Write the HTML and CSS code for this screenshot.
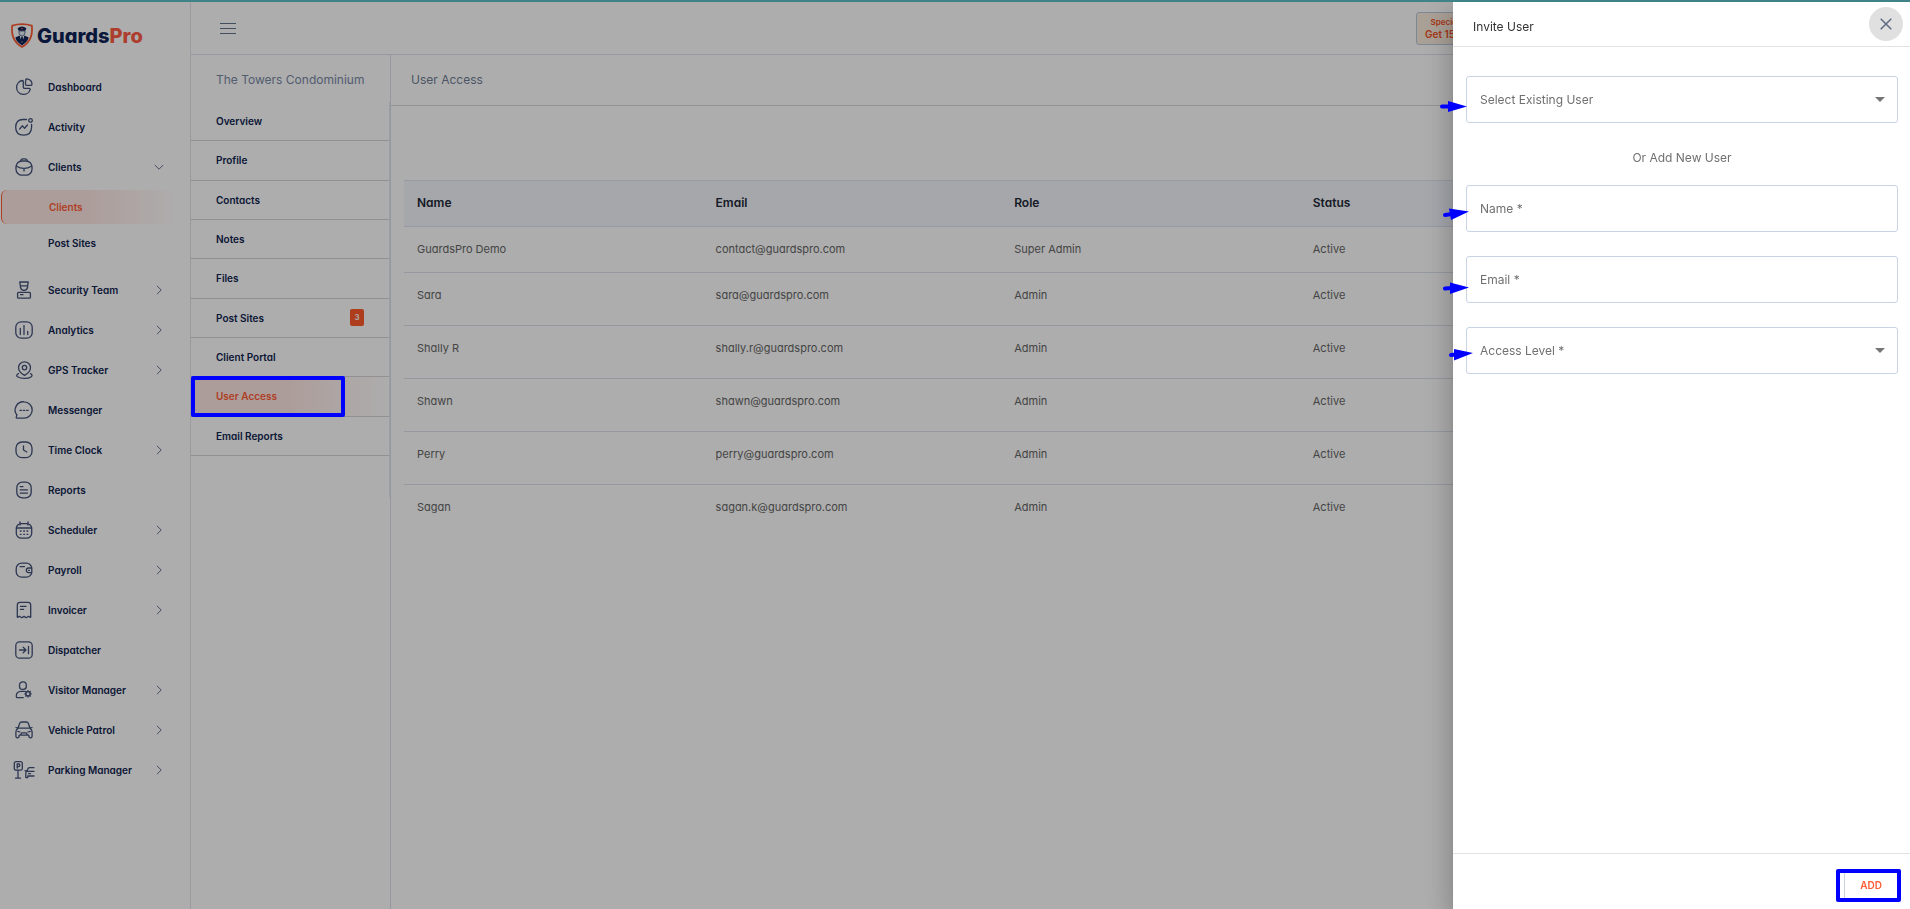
FILE: index.html
```html
<!DOCTYPE html>
<html lang="en">
<head>
<meta charset="utf-8">
<title>GuardsPro – User Access</title>
<meta name="viewport" content="width=device-width, initial-scale=1">
<link rel="stylesheet" href="styles.css">
</head>
<body>
<svg class="defs" aria-hidden="true">
  <symbol id="right" viewBox="0 0 6 10"><path d="M1 .8 5.2 5 1 9.2"/></symbol>
</svg>
<div class="app">
  <aside class="sidebar">
    <a class="brand" href="#">
      <svg class="shield" viewBox="0 0 24 26" aria-hidden="true">
        <path d="M2.2 2.6Q12-.4 21.8 2.6Q23.6 17.5 12 24Q.4 17.5 2.2 2.6Z" fill="#fff" stroke="#ff5c35" stroke-width="1.8"/>
        <path d="M5.3 14.6 9.6 12.4 12 20 14.4 12.4 18.7 14.6Q17.6 19.2 12 22.4 6.4 19.2 5.3 14.6Z" fill="#0d2256"/>
        <path d="M7.6 5.2Q12 2 16.4 5.2L15.4 7.8H8.6Z" fill="#0d2256"/>
        <path d="M9 8h6v2.2Q14.6 12.6 12 13 9.4 12.6 9 10.2Z" fill="#e9edf6" stroke="#0d2256" stroke-width=".6"/>
        <path d="M11.3 13.6h1.4l.5 3.6-1.2 2-1.2-2Z" fill="#0d2256"/>
        <circle cx="12" cy="5.6" r=".8" fill="#ff5c35"/>
      </svg>
      <span class="brand-name">Guards<span class="accent">Pro</span></span>
    </a>
    <nav class="menu">
      <a href="#"><svg class="icon" viewBox="0 0 18 18"><path d="M7.5 2.5A7 7 0 1 0 15.3 11.4Q15.2 10.4 14 10.4H9.8Q8.3 10.4 8.3 9V3.4Q8.3 2.5 7.5 2.5Z"/><path d="M10.8 1.6Q11 .8 12 .8 16.600 1.500 17 6Q17 7.200 16 7.300H11.600Q10.400 7.200 10.400 6Z"/></svg><span>Dashboard</span></a>
      <a href="#"><svg class="icon" viewBox="0 0 18 18"><path d="M11.500 1.500H8Q.7 1.500 .7 9.300T8.500 17.200 16.600 9.300V6.500"/><path d="M4.700 11 7.300 7.800 9.600 10.200 12.400 7"/><circle cx="15.500" cy="2.400" r="1.800"/></svg><span>Activity</span></a>
      <a href="#"><svg class="icon" viewBox="0 0 18 18"><rect x="1" y="3" width="16" height="14.200" rx="6"/><path d="M5.800 3Q6 .8 8 .8H10Q12 .8 12.200 3M1.200 8Q9 12.800 16.800 8M9 10.500V13"/></svg><span>Clients</span><svg class="chev chev-down" viewBox="0 0 10 6"><path d="M.8 1 5 5.200 9.200 1"/></svg></a>
      <div class="submenu">
        <a class="current" href="#">Clients</a>
        <a href="#">Post Sites</a>
      </div>
      <a href="#"><svg class="icon" viewBox="0 0 18 18"><path d="M4.800 1H13.200L12.600 4.800H5.400ZM5.400 4.800V6.200Q5.800 9.200 9 9.400 12.200 9.200 12.600 6.200V4.800"/><rect x="2.600" y="11.400" width="12.800" height="5.800" rx="1"/><path d="M5.500 13.700H8"/></svg><span>Security Team</span><svg class="chev"><use href="#right"/></svg></a>
      <a href="#"><svg class="icon" viewBox="0 0 18 18"><rect x=".8" y=".8" width="16.400" height="16.400" rx="5.500"/><path d="M5.300 7.500V13.500M9 4.500V13.500M12.700 10.500V13.500"/></svg><span>Analytics</span><svg class="chev"><use href="#right"/></svg></a>
      <a href="#"><svg class="icon" viewBox="0 0 18 18"><path d="M9.500 14.400Q3.500 11 3.500 6.500A6 5.700 0 0 1 15.500 6.500Q15.500 11 9.500 14.400Z"/><circle cx="9.500" cy="6.600" r="2.200"/><path d="M3.500 12.600Q.5 14 2.500 15.700 5 17.400 9.500 17.400T16.200 15.700Q18.200 14 15.500 12.600"/></svg><span>GPS Tracker</span><svg class="chev"><use href="#right"/></svg></a>
      <a href="#"><svg class="icon" viewBox="0 0 18 18"><path d="M9 .8A8.200 8.200 0 1 1 9 17.200H2Q.9 17 1.300 15.900L1.900 14A8.200 8.200 0 0 1 9 .8Z"/><path d="M5 9.300H6.500M8.300 9.300H9.800M11.600 9.300H13.100"/></svg><span>Messenger</span></a>
      <a href="#"><svg class="icon" viewBox="0 0 18 18"><rect x="1" y="1" width="16" height="15.600" rx="6"/><path d="M8.500 4.800V9L11.800 11"/></svg><span>Time Clock</span><svg class="chev"><use href="#right"/></svg></a>
      <a href="#"><svg class="icon" viewBox="0 0 18 18"><rect x="1.800" y="1.200" width="14.400" height="15.600" rx="5.500"/><path d="M5.200 5.600H8M5.200 8.900H12.500M5.200 12.200H12.500"/></svg><span>Reports</span></a>
      <a href="#"><svg class="icon" viewBox="0 0 18 18"><rect x="1.300" y="2.600" width="15.400" height="14.600" rx="5"/><path d="M5 .8V4M13 .8V4M1.400 7H16.600"/><path d="M5.300 10h.8M8.700 10h.8M12 10h.8M5.300 13.300h.8M8.700 13.300h.8M12 13.300h.8"/></svg><span>Scheduler</span><svg class="chev"><use href="#right"/></svg></a>
      <a href="#"><svg class="icon" viewBox="0 0 18 18"><rect x="1.200" y="2.200" width="15.600" height="14" rx="5.500"/><path d="M5 5.600H9.500M16.600 7H13.500Q11.300 7.300 11.300 9.300T13.500 11.700H16.600M13.600 9.300H14.400"/></svg><span>Payroll</span><svg class="chev"><use href="#right"/></svg></a>
      <a href="#"><svg class="icon" viewBox="0 0 18 18"><path d="M2.300 16.300V4Q2.300 1.300 5 1.300H13Q15.700 1.300 15.700 4V16.300L13.500 15.300 11.200 16.800 9 15.400 6.800 16.800 4.500 15.300Z"/><path d="M5.500 5.400H11M5.500 8.400H8.600"/></svg><span>Invoicer</span><svg class="chev"><use href="#right"/></svg></a>
      <a href="#"><svg class="icon" viewBox="0 0 18 18"><rect x=".8" y=".8" width="16.400" height="16.400" rx="3.800"/><path d="M4.500 9H10.600M8.200 6.300 11 9 8.200 11.700M13.500 5.300V12.700"/></svg><span>Dispatcher</span></a>
      <a href="#"><svg class="icon" viewBox="0 0 18 18"><rect x="4.500" y=".8" width="6.800" height="7.600" rx="3.200"/><path d="M9.500 10.300H6Q1.300 10.500 1.300 15V15.500Q1.300 16.700 2.500 16.700H8.200"/><circle cx="13" cy="12.800" r="2.200"/><path d="M13 9.600v1M13 15v1M9.800 12.800h1M15.200 12.800h1M10.700 10.500l.8.8M14.500 14.300l.8.8M10.700 15.100l.8-.8M14.500 11.300l.8-.8"/></svg><span>Visitor Manager</span><svg class="chev"><use href="#right"/></svg></a>
      <a href="#"><svg class="icon" viewBox="0 0 18 18"><path d="M3 7.200 4.500 2.700Q5 1 7 1H11Q13 1 13.500 2.700L15 7.200M1 6.500 3 7.200H15L17 6.500M3 7.200Q1 8.500 .9 11V15.200Q1 16.900 2.500 16.900T4.200 15.200V14.200H13.800V15.200Q14 16.900 15.500 16.900T17.100 15.200V11Q17 8.500 15 7.200M2.800 10.300 5 11M15.200 10.300 13 11M5.500 14 6.800 11.800H11.200L12.500 14"/></svg><span>Vehicle Patrol</span><svg class="chev"><use href="#right"/></svg></a>
      <a href="#"><svg class="icon" viewBox="0 0 18 18"><rect x="-.7" y=".7" width="8" height="8.500" rx="1.700"/><path d="M2.200 7V3H3.500Q4.900 3.100 4.900 4.300T3.500 5.600H2.200M3 9.200V17M.5 17.200H5.500M19 6.600H14.500Q13.300 6.700 12.800 8L12 10.300M19 10.400H12Q10.800 10.600 10.800 12V16.600H12.800V15H19M10 9.600 12 10.400M13.500 12.700H15.500"/></svg><span>Parking Manager</span><svg class="chev"><use href="#right"/></svg></a>
    </nav>
  </aside>

  <div class="page">
    <header class="topbar">
      <button class="burger" type="button" aria-label="Toggle menu"><span></span><span></span><span></span></button>
      <a class="promo" href="#"><span class="promo-small">Special</span><span class="promo-big">Get 15%</span></a>
    </header>
    <div class="body">
      <section class="client">
        <h2 class="client-title">The Towers Condominium</h2>
        <div class="client-panel">
          <nav class="tabs">
            <a href="#">Overview</a>
            <a href="#">Profile</a>
            <a href="#">Contacts</a>
            <a href="#">Notes</a>
            <a href="#">Files</a>
            <a href="#">Post Sites<span class="badge">3</span></a>
            <a href="#">Client Portal</a>
            <a class="current" href="#">User Access</a>
            <a href="#">Email Reports</a>
          </nav>
        </div>
      </section>
      <main class="content">
        <h1 class="content-title">User Access</h1>
        <table class="users">
          <thead><tr><th>Name</th><th>Email</th><th>Role</th><th>Status</th><th></th></tr></thead>
          <tbody>
            <tr class="owner"><td>GuardsPro Demo</td><td>contact@guardspro.com</td><td>Super Admin</td><td>Active</td><td></td></tr>
            <tr><td>Sara</td><td>sara@guardspro.com</td><td>Admin</td><td>Active</td><td></td></tr>
            <tr><td>Shally R</td><td>shally.r@guardspro.com</td><td>Admin</td><td>Active</td><td></td></tr>
            <tr><td>Shawn</td><td>shawn@guardspro.com</td><td>Admin</td><td>Active</td><td></td></tr>
            <tr><td>Perry</td><td>perry@guardspro.com</td><td>Admin</td><td>Active</td><td></td></tr>
            <tr><td>Sagan</td><td>sagan.k@guardspro.com</td><td>Admin</td><td>Active</td><td></td></tr>
          </tbody>
        </table>
      </main>
    </div>
  </div>
</div>

<div class="backdrop"></div>
<div class="tab-mark" aria-hidden="true"></div>

<form class="drawer">
  <header class="drawer-head">
    <h2>Invite User</h2>
    <button class="close" type="button" aria-label="Close"><svg viewBox="0 0 12 12"><path d="M.7.7 11.300 11.300M11.300.7.7 11.300"/></svg></button>
  </header>
  <div class="fields">
    <div class="field">
      <label for="existing">Select Existing User</label>
      <select id="existing"><option></option></select>
      <svg class="caret" viewBox="0 0 10 5"><path d="M0 0H10L5 5Z"/></svg>
      <svg class="arrow" viewBox="0 0 40 48"><path d="M6 30.500H14"/><polygon points="12,25 31,30.500 12,36"/></svg>
    </div>
    <p class="or">Or Add New User</p>
    <div class="field">
      <label for="name">Name *</label>
      <input id="name" type="text">
      <svg class="arrow" viewBox="0 0 40 48"><path d="M9 30 16 29"/><polygon points="13,23.500 33,26.500 15,35"/></svg>
    </div>
    <div class="field">
      <label for="email">Email *</label>
      <input id="email" type="email">
      <svg class="arrow" viewBox="0 0 40 48"><path d="M9 32.500 16 32"/><polygon points="14,26.500 33,31.500 14,38"/></svg>
    </div>
    <div class="field">
      <label for="level">Access Level *</label>
      <select id="level"><option></option></select>
      <svg class="caret" viewBox="0 0 10 5"><path d="M0 0H10L5 5Z"/></svg>
      <svg class="arrow" viewBox="0 0 40 48"><path d="M15 28 20 27.500"/><polygon points="18,22 37,26 18,33.500"/></svg>
    </div>
  </div>
  <footer class="drawer-foot">
    <div class="add-wrap"><button class="add" type="submit">ADD</button></div>
  </footer>
</form>
<div class="progress"></div>
</body>
</html>
```

FILE: styles.css
```css
* { box-sizing: border-box; }

body {
  margin: 0;
  height: 100vh;
  overflow: hidden;
  background: #fff;
  color: #666;
  font-family: Inter, "Liberation Sans", sans-serif;
  font-size: 12px;
  line-height: 16px;
}

a { color: inherit; text-decoration: none; }
h1, h2, p { margin: 0; font-size: 12px; font-weight: 400; }
button { padding: 0; border: 0; background: none; font: inherit; cursor: pointer; }
svg { fill: none; overflow: visible; flex: none; }
.defs { position: absolute; width: 0; height: 0; }

.app {
  display: flex;
  height: 100vh;
  padding-top: 2px;
  font-feature-settings: "cv11";
}

.progress {
  position: fixed;
  inset: 0 0 auto;
  height: 2px;
  z-index: 5;
  background: #3f8387;
}

/* Sidebar */
.sidebar {
  flex: none;
  width: 191px;
  border-right: 1px solid #e3e3ea;
}

.brand {
  display: flex;
  align-items: center;
  gap: 3px;
  height: 65px;
  padding: 2px 0 0 10px;
}
.shield { width: 24px; height: 26px; }
.brand-name {
  color: #0d2256;
  font-size: 20px;
  font-weight: 800;
  line-height: 26px;
}
.accent { color: #ff5c43; }

.menu {
  color: #10244f;
  font-size: 10px;
  font-weight: 600;
}
.menu > a {
  display: flex;
  align-items: center;
  height: 40px;
  padding: 0 26px 0 15px;
}
.icon {
  width: 18px;
  height: 18px;
  margin-right: 15px;
  stroke: #43527a;
  stroke-width: 1.3;
  stroke-linecap: round;
  stroke-linejoin: round;
}
.chev {
  width: 6px;
  height: 10px;
  margin: 0 2px 0 auto;
  stroke: #64708c;
  stroke-width: 1;
}
.chev-down { width: 10px; height: 6px; margin-right: 0; }

.submenu {
  display: grid;
  gap: 2px;
  padding: 3px 14px 10px 1px;
}
.submenu a { padding: 9px 0 9px 47px; }
.submenu .current { border-left: 1px solid #ff5c35; border-radius: 6px; }
.current {
  color: #ff5c35;
  background: linear-gradient(90deg, #ffe8e4 50%, #fff);
}

/* Top bar */
.page { flex: 1; min-width: 0; display: flex; flex-direction: column; }
.topbar {
  display: flex;
  justify-content: space-between;
  align-items: center;
  flex: none;
  height: 53px;
  padding: 0 436px 0 29px;
  border-bottom: 1px solid #dfe1ec;
}
.burger { display: grid; gap: 4px; width: 16px; }
.burger span { height: 1px; background: #64748b; }
.promo {
  display: grid;
  align-content: center;
  justify-items: center;
  width: 58px;
  height: 33px;
  border: 1px solid #b9c8dd;
  border-radius: 3px;
  background: #faecde;
  color: #f4511e;
  font-weight: 600;
}
.promo-small { padding-top: 1px; font-size: 8px; line-height: 11px; }
.promo-big { font-size: 10px; line-height: 12px; }

/* Client column */
.body { flex: 1; display: flex; }
.client {
  flex: none;
  width: 200px;
  border-right: 1px solid #dde0ea;
}
.client-title {
  height: 47px;
  padding: 17px 0 0 25px;
  color: #7a89a6;
}
.client-panel { height: 395px; border-right: 1px solid #e2e8f5; }
.tabs {
  display: grid;
  grid-auto-rows: 1fr;
  height: 354px;
  color: #10244f;
  font-size: 10px;
  font-weight: 600;
}
.tabs a {
  display: flex;
  align-items: center;
  justify-content: space-between;
  padding: 0 25px;
  border-bottom: 1px solid #d6d6d9;
}
.tabs .current { color: #ff5c35; }
.badge {
  width: 14px;
  border-radius: 2px;
  background: #ff5a2b;
  color: #fff;
  font-size: 8px;
  line-height: 17px;
  text-align: center;
}

/* Users table */
.content { flex: 1; min-width: 0; }
.content-title {
  height: 51px;
  padding: 17px 20px 0;
  border-bottom: 1px solid #d9d9dc;
  color: #707e95;
}
.users {
  width: calc(100% - 26px);
  margin: 74px 13px 0;
  border-collapse: collapse;
  table-layout: fixed;
  font-size: 11px;
}
.users th, .users td { padding: 0 13px; text-align: left; }
.users th {
  height: 46px;
  padding-bottom: 2px;
  border: solid #dde3f0;
  border-width: 1px 0;
  background: #f3f6fd;
  color: #1f2937;
  font-size: 12px;
  font-weight: 600;
}
.users td {
  height: 53px;
  padding-top: 14px;
  border-bottom: 1px solid #dce1ee;
  vertical-align: top;
}
.users .owner td { height: 46px; }
.users tr:last-child td { border-bottom: 0; }

.backdrop { position: fixed; inset: 0; z-index: 1; background: rgba(0, 0, 0, .32); }

/* Highlight round the active tab */
.tab-mark {
  position: absolute;
  z-index: 2;
  left: 191px;
  top: 376px;
  width: 154px;
  height: 41px;
  border: 4px solid #00f;
  border-radius: 2px;
}

/* Drawer */
.drawer {
  position: fixed;
  inset: 0 0 0 auto;
  z-index: 3;
  display: flex;
  flex-direction: column;
  width: 457px;
  background: #fff;
  box-shadow: 0 8px 10px -5px rgba(0, 0, 0, .2), 0 16px 24px 2px rgba(0, 0, 0, .14), 0 6px 30px 5px rgba(0, 0, 0, .12);
  color: #707070;
}
.drawer-head {
  display: flex;
  align-items: center;
  justify-content: space-between;
  height: 47px;
  padding: 4px 7px 2px 20px;
  border-bottom: 1px solid #e0e2e4;
}
.drawer-head h2 { padding-top: 6px; color: #333; }
.close {
  display: grid;
  place-items: center;
  width: 34px;
  height: 34px;
  border-radius: 50%;
  background: #e0e0e0;
}
.close svg { width: 12px; height: 12px; stroke: #5b6b80; stroke-width: 1.500; }

.fields {
  flex: 1;
  padding: 29px 12px 0 13px;
}
.field { position: relative; display: grid; align-items: center; height: 47px; }
.field + .field { margin-top: 24px; }
.field > label, .field > input, .field > select { grid-area: 1 / 1; }
.field > label { z-index: 1; padding-left: 14px; pointer-events: none; }
.field > input, .field > select {
  width: 100%;
  height: 47px;
  padding: 0 14px;
  border: 1px solid #c8d4e3;
  border-radius: 3px;
  background: #fff;
  font: inherit;
  appearance: none;
}
.caret {
  position: absolute;
  right: 13px;
  top: 21px;
  width: 10px;
  height: 5px;
  fill: #757575;
  pointer-events: none;
}
.arrow {
  position: absolute;
  z-index: 2;
  left: -30px;
  top: 0;
  width: 40px;
  height: 48px;
  fill: #00f;
  stroke: #00f;
  pointer-events: none;
}
.arrow path { stroke-width: 4; stroke-linecap: round; }
.arrow polygon { stroke: none; }
.or { margin: 27px 0 19px; text-align: center; }

.drawer-foot {
  display: flex;
  justify-content: flex-end;
  height: 56px;
  padding: 15px 9px 7px;
  border-top: 1px solid #e0e2e4;
}
.add-wrap {
  width: 65px;
  height: 33px;
  padding-left: 4px;
  border: 4px solid #00f;
  border-radius: 2px;
}
.add {
  width: 100%;
  height: 100%;
  padding-bottom: 2px;
  border-left: 1px solid #c8d4e3;
  color: #ff5c35;
  font-size: 10px;
  font-weight: 600;
}
```
